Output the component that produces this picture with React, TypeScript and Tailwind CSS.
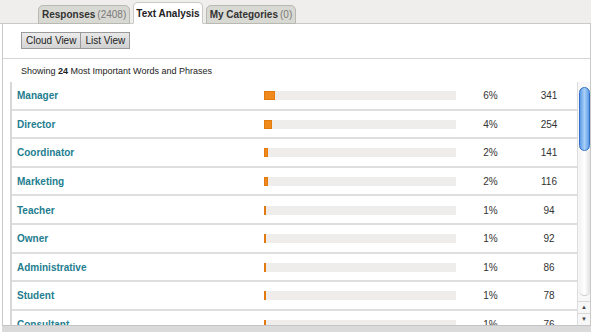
import React from "react";

const rows = [
  { name: "Manager", pct: "6%", count: 341, w: 11 },
  { name: "Director", pct: "4%", count: 254, w: 8 },
  { name: "Coordinator", pct: "2%", count: 141, w: 4 },
  { name: "Marketing", pct: "2%", count: 116, w: 4 },
  { name: "Teacher", pct: "1%", count: 94, w: 2 },
  { name: "Owner", pct: "1%", count: 92, w: 2 },
  { name: "Administrative", pct: "1%", count: 86, w: 2 },
  { name: "Student", pct: "1%", count: 78, w: 2 },
  { name: "Consultant", pct: "1%", count: 76, w: 2 },
];

export default function App() {
  return (
    <div
      className="w-[600px] h-[332px] bg-white overflow-hidden flex flex-col text-[#333]"
      style={{ fontFamily: '"Liberation Sans", Arial, sans-serif' }}
    >
      {/* tab bar */}
      <div className="w-[591px] h-[24px] shrink-0 bg-[#efeeec] border-b border-[#c9c9c6] flex items-end pl-[38px] gap-[3px]">
        <div className="h-[19px] -mb-px px-[3px] flex items-center rounded-t-[5px] border border-[#b9b9b4] bg-[#d9d9d3] text-[10px] font-bold text-[#333] whitespace-nowrap">
          Responses<span className="font-normal text-[#7a7a7a] ml-[2px]">(2408)</span>
        </div>
        <div className="h-[22px] -mb-px px-[2px] flex items-center rounded-t-[5px] border border-[#c9c9c6] border-b-white bg-white text-[10px] font-bold text-[#222] whitespace-nowrap">
          Text Analysis
        </div>
        <div className="h-[19px] -mb-px px-[3px] flex items-center rounded-t-[5px] border border-[#b9b9b4] bg-[#d9d9d3] text-[10px] font-bold text-[#333] whitespace-nowrap">
          My Categories<span className="font-normal text-[#7a7a7a] ml-[2px]">(0)</span>
        </div>
      </div>

      {/* panel */}
      <div className="w-[589px] flex-1 flex flex-col border-r border-l border-[#c9c9c6] ml-[2px] min-h-0">
        <div className="h-[35px] shrink-0 border-b border-[#d4d4d4] pl-[18px] pt-[8px]">
          <div className="flex h-[17px] border border-[#9a9a9a] w-fit text-[10px] text-[#222]">
            <div className="px-[4px] flex items-center bg-gradient-to-b from-[#ececec] to-[#d4d4d4] border-r border-[#9a9a9a]">
              Cloud View
            </div>
            <div className="px-[4px] flex items-center bg-gradient-to-b from-[#e8e8e8] to-[#d0d0d0]">
              List View
            </div>
          </div>
        </div>
        <div className="h-[23px] shrink-0 pl-[18px] pt-[6px] text-[9px] text-[#222]">
          Showing <span className="font-bold">24</span> Most Important Words and Phrases
        </div>

        {/* list */}
        <div className="flex-1 flex ml-[7px] border-l-2 border-[#d8d8d8] min-h-0">
          <div className="flex-1 overflow-hidden">
            {rows.map((r) => (
              <div
                key={r.name}
                className="h-[28.6px] border-b-2 border-[#dedede] flex items-center text-[10px] pt-[1px]"
              >
                <div className="w-[252px] pl-[5px] font-bold text-[#237d8f] shrink-0">{r.name}</div>
                <div className="w-[192px] h-[9px] bg-[#eeedeb] shrink-0 flex">
                  <div
                    className="h-full bg-[#f08a1c] border border-[#e27a10]"
                    style={{ width: r.w }}
                  />
                </div>
                <div className="w-[68px] text-center shrink-0 pl-[1px]">{r.pct}</div>
                <div className="w-[50px] text-center shrink-0">{r.count}</div>
              </div>
            ))}
          </div>
          {/* scrollbar */}
          <div className="w-[13px] shrink-0 border-l border-[#dcdcdc] bg-[#f7f7f7] flex flex-col items-center pt-[5px]">
            <div className="w-[11px] h-[64px] rounded-[6px] border border-[#2f6fc8] bg-gradient-to-r from-[#5d9ce8] via-[#a9cff7] to-[#5d9ce8]" />
            <div className="flex-1 w-[11px] rounded-b-[6px] bg-gradient-to-r from-[#f2f2f2] via-white to-[#e2e2e2] border-b border-[#cfcfcf] mb-[5px]" />
            <div className="h-[12px] w-full flex items-center justify-center border-t border-[#d8d8d8] text-[6px] text-[#444]">
              ▲
            </div>
            <div className="h-[12px] w-full flex items-center justify-center border-t border-[#d8d8d8] text-[6px] text-[#444]">
              ▼
            </div>
          </div>
        </div>
        <div className="h-[7px] shrink-0 bg-[#dadada] border-t border-[#c4c4c4] -mx-px" />
      </div>
    </div>
  );
}
